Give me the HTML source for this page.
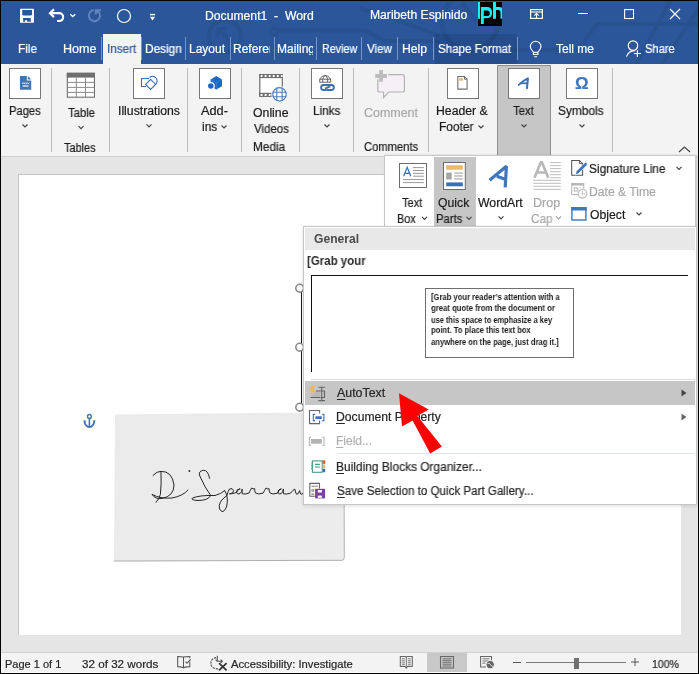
<!DOCTYPE html><html><head><meta charset="utf-8"><style>
html,body{margin:0;padding:0;width:699px;height:674px;overflow:hidden;background:#000}
.t{position:absolute;white-space:pre;will-change:transform;-webkit-text-stroke:0.2px currentColor;font-family:"Liberation Sans",sans-serif;transform-origin:0 0}
.r{position:absolute}
.s{position:absolute;overflow:visible}
</style></head><body>
<div class="r" style="left:0px;top:0px;width:699px;height:674px;background:#000;"></div>
<div class="r" style="left:1px;top:1px;width:697px;height:63px;background:#2b579a;"></div>
<svg class="s" style="left:1px;top:1px;overflow:hidden;" width="697" height="63" viewBox="1 1 697 63"><g fill="none" stroke="#28518f" stroke-width="4"><circle cx="225" cy="36" r="16"/><path d="M231 42L218 29M218 37V29H226" stroke-width="3.5"/><circle cx="273.6" cy="31.4" r="3.5" stroke-width="2.5"/><path d="M277 30.5H365L385 41H440"/><circle cx="470" cy="22" r="28" stroke-width="5"/><path d="M360 8L392 18L440 36"/><path d="M462 2L476 22"/><path d="M510 50H578L597 24H699"/><path d="M671 0L636 64M699 8L662 64"/></g></svg>
<svg class="s" style="left:20px;top:9px;" width="15" height="15" viewBox="0 0 15 15"><rect x="0" y="-0.2" width="14" height="14" rx="0.6" fill="#fff"/><path d="M2.2 1.1H12V5.5L11 6.4H3.2L2.2 5.5Z" fill="#2b579a"/><path d="M3.1 9H10.8V12.8H7.2V11.2H5V12.8H3.1Z" fill="#2b579a"/></svg>
<svg class="s" style="left:46px;top:6px;" width="20" height="18" viewBox="46 6 20 18"><path d="M50.5 13.2H59.2A3.9 3.9 0 0 1 59.2 21H57" fill="none" stroke="#fff" stroke-width="2.2"/><path d="M54 9.3L50 13.2L54 17.1" fill="none" stroke="#fff" stroke-width="2.2"/></svg>
<svg class="s" style="left:69px;top:12px;" width="8" height="6" viewBox="69 12 8 6"><path d="M70.3 14.2L72.8 16.5L75.3 14.2" fill="none" stroke="#fff" stroke-width="1.3"/></svg>
<svg class="s" style="left:85px;top:7px;" width="18" height="18" viewBox="85 7 18 18"><path d="M93.8 10A5.6 5.6 0 1 0 98.5 11.7" fill="none" stroke="#6184bd" stroke-width="1.9"/><path d="M101 10.1H95.8V14.8M95.8 10.1L98.6 12.8" fill="none" stroke="#6184bd" stroke-width="1.9"/></svg>
<svg class="s" style="left:115px;top:7px;" width="18" height="18" viewBox="115 7 18 18"><circle cx="124" cy="16" r="6.5" fill="none" stroke="#fff" stroke-width="1.2"/></svg>
<svg class="s" style="left:148px;top:12px;" width="9" height="10" viewBox="148 12 9 10"><path d="M149.9 14.6h5.2" stroke="#fff" stroke-width="1.4"/><path d="M149.9 16.8h5.2l-2.6 3.6z" fill="#fff"/></svg>
<div class="t" style="left:205.33px;top:10.00px;font-size:12px;line-height:12px;color:#fff;transform:scaleX(1.0150);">Document1  -  Word</div>
<div class="t" style="left:370.33px;top:9.00px;font-size:12px;line-height:12px;color:#fff;transform:scaleX(1.0114);">Maribeth Espinido</div>
<div class="r" style="left:478px;top:2px;width:24px;height:24px;background:#000;"></div>
<svg class="s" style="left:478px;top:2px;overflow:hidden;" width="24" height="24" viewBox="478 2 24 24"><g fill="#12f2f2"><rect x="478" y="2" width="2" height="16.8"/><path d="M480.9 6.9H487Q492.1 6.9 492.1 12.6Q492.1 18.3 487 18.3H483.8V24H480.9ZM483.8 10.5V16H487Q489.8 16 489.8 13.2Q489.8 10.5 487 10.5Z" fill-rule="evenodd"/><rect x="493" y="2" width="3" height="16.8"/><path d="M496 6.9H499Q503.5 6.9 503.5 11V18.8H500.5V12.5Q500.5 10 498.5 10H496Z"/></g></svg>
<svg class="s" style="left:528px;top:7px;" width="17" height="14" viewBox="528 7 17 14"><rect x="530.6" y="9.6" width="11.8" height="8.8" fill="none" stroke="#fff" stroke-width="1.2"/><path d="M531 12H542" stroke="#fff" stroke-width="1.1"/><path d="M536.5 18.4V13.6M534.3 15.6L536.5 13.4L538.7 15.6" fill="none" stroke="#fff" stroke-width="1.1"/></svg>
<div class="r" style="left:578px;top:13px;width:10px;height:1px;background:#fff;"></div>
<svg class="s" style="left:622px;top:7px;" width="14" height="14" viewBox="622 7 14 14"><rect x="624.6" y="9.6" width="8.9" height="8.9" fill="none" stroke="#fff" stroke-width="1.1"/></svg>
<svg class="s" style="left:669px;top:8px;" width="12" height="12" viewBox="0 0 12 12"><path d="M1 1L11 11M11 1L1 11" stroke="#fff" stroke-width="1.2"/></svg>
<div class="r" style="left:102.5px;top:34px;width:38.5px;height:30px;background:#f3f3f3;"></div>
<div class="r" style="left:435px;top:34px;width:82px;height:30px;background:rgba(10,20,50,0.14);"></div>
<div class="r" style="left:101px;top:37px;width:1px;height:23px;background:#7495c6;"></div>
<div class="r" style="left:141px;top:37px;width:1px;height:23px;background:#7495c6;"></div>
<div class="r" style="left:185px;top:37px;width:1px;height:23px;background:#7495c6;"></div>
<div class="r" style="left:230px;top:37px;width:1px;height:23px;background:#7495c6;"></div>
<div class="r" style="left:274px;top:37px;width:1px;height:23px;background:#7495c6;"></div>
<div class="r" style="left:316px;top:37px;width:1px;height:23px;background:#7495c6;"></div>
<div class="r" style="left:361px;top:37px;width:1px;height:23px;background:#7495c6;"></div>
<div class="r" style="left:397px;top:37px;width:1px;height:23px;background:#7495c6;"></div>
<div class="r" style="left:433px;top:37px;width:1px;height:23px;background:#7495c6;"></div>
<div class="r" style="left:517px;top:37px;width:1px;height:23px;background:#7495c6;"></div>
<div class="t" style="left:17.76px;top:43.00px;font-size:12px;line-height:12px;color:#fff;transform:scaleX(0.9820);">File</div>
<div class="t" style="left:62.70px;top:43.00px;font-size:12px;line-height:12px;color:#fff;transform:scaleX(1.0466);">Home</div>
<div class="t" style="left:145.46px;top:43.00px;font-size:12px;line-height:12px;color:#fff;transform:scaleX(0.9837);">Design</div>
<div class="t" style="left:189.04px;top:43.00px;font-size:12px;line-height:12px;color:#fff;">Layout</div>
<div class="t" style="left:321.54px;top:43.00px;font-size:12px;line-height:12px;color:#fff;transform:scaleX(0.8932);">Review</div>
<div class="t" style="left:367.14px;top:43.00px;font-size:12px;line-height:12px;color:#fff;transform:scaleX(0.9635);">View</div>
<div class="t" style="left:402.42px;top:43.00px;font-size:12px;line-height:12px;color:#fff;transform:scaleX(1.0164);">Help</div>
<div class="t" style="left:438.48px;top:43.00px;font-size:12px;line-height:12px;color:#fff;transform:scaleX(0.9626);">Shape Format</div>
<div class="t" style="left:555.66px;top:43.00px;font-size:12px;line-height:12px;color:#fff;">Tell me</div>
<div class="t" style="left:644.50px;top:43.00px;font-size:12px;line-height:12px;color:#fff;transform:scaleX(0.9288);">Share</div>
<div class="t" style="left:106.55px;top:43.00px;font-size:12px;line-height:12px;color:#2b579a;transform:scaleX(0.9737);">Insert</div>
<div class="t" style="left:233.04px;top:43.00px;font-size:12px;line-height:12px;color:#fff;width:36.5px;overflow:hidden;">References</div>
<div class="t" style="left:277.04px;top:43.00px;font-size:12px;line-height:12px;color:#fff;width:35.5px;overflow:hidden;">Mailings</div>
<svg class="s" style="left:527px;top:39px;" width="17" height="20" viewBox="527 39 17 20"><path d="M533.4 52.2Q530.3 49.2 530.3 46.6A5.35 5.35 0 0 1 541 46.6Q541 49.2 537.9 52.2V54.5H533.4Z" fill="none" stroke="#fff" stroke-width="1.15" stroke-linejoin="round"/><path d="M533.4 52.4H537.9M534.2 56.7H537.1" stroke="#fff" stroke-width="1.15"/></svg>
<svg class="s" style="left:623px;top:39px;" width="20" height="20" viewBox="623 39 20 20"><circle cx="633" cy="45.6" r="4.75" fill="none" stroke="#fff" stroke-width="1.2"/><path d="M626.5 56.6Q628.5 50.9 634.6 50.6" fill="none" stroke="#fff" stroke-width="1.2"/><path d="M637.4 50.2V57M634 53.5H641" stroke="#fff" stroke-width="1.2"/></svg>
<div class="r" style="left:1px;top:64px;width:697px;height:92px;background:#f3f3f3;"></div>
<div class="r" style="left:1px;top:156px;width:697px;height:1px;background:#d0d0d0;"></div>
<div class="r" style="left:1px;top:157px;width:697px;height:515px;background:#e5e5e5;"></div>
<div class="r" style="left:51px;top:68px;width:1px;height:84px;background:#bdbdbd;"></div>
<div class="r" style="left:109px;top:68px;width:1px;height:84px;background:#bdbdbd;"></div>
<div class="r" style="left:187px;top:68px;width:1px;height:84px;background:#bdbdbd;"></div>
<div class="r" style="left:241px;top:68px;width:1px;height:84px;background:#bdbdbd;"></div>
<div class="r" style="left:299px;top:68px;width:1px;height:84px;background:#bdbdbd;"></div>
<div class="r" style="left:353px;top:68px;width:1px;height:84px;background:#bdbdbd;"></div>
<div class="r" style="left:428px;top:68px;width:1px;height:84px;background:#bdbdbd;"></div>
<div class="r" style="left:612px;top:68px;width:1px;height:84px;background:#bdbdbd;"></div>
<div class="r" style="left:9px;top:68px;width:32px;height:31px;background:#fff;box-sizing:border-box;border:1px solid #777;"></div>
<svg class="s" style="left:19px;top:74px;" width="14" height="17" viewBox="19 74 14 17"><path d="M20 76H26.8V80.6H31.2V89.8H20Z" fill="#3f74b5"/><path d="M27.8 76L31.2 79.6H27.8Z" fill="#3f74b5"/><path d="M22.2 83.8l1-1.1 1 1.1 1-1.1 1 1.1 1-1.1 1 1.1 1-1.1" fill="none" stroke="#fff" stroke-width="0.9"/><path d="M22.6 86H28.6" stroke="#fff" stroke-width="1.2"/></svg>
<div class="t" style="left:8.51px;top:105.00px;font-size:12px;line-height:12px;color:#1a1a1a;transform:scaleX(0.9314);">Pages</div>
<svg class="s" style="left:21px;top:122px;" width="8" height="6" viewBox="21 122 8 6"><path d="M22.50 124.50L25.00 127.00L27.50 124.50" fill="none" stroke="#444" stroke-width="1.2"/></svg>
<svg class="s" style="left:66px;top:72px;" width="30" height="27" viewBox="66 72 30 27"><rect x="67.35" y="73.3" width="27.1" height="23.9" fill="#fff" stroke="#6e6e6e" stroke-width="1.1"/><rect x="66.8" y="72.8" width="28.2" height="4.8" fill="#6e6e6e"/><path d="M67.5 82.4H94.3M67.5 87.4H94.3M67.5 92.4H94.3M76.3 77.5V97M85.5 77.5V97" stroke="#8a8a8a" stroke-width="1"/></svg>
<div class="t" style="left:67.57px;top:107.00px;font-size:12px;line-height:12px;color:#1a1a1a;transform:scaleX(0.9391);">Table</div>
<svg class="s" style="left:77px;top:124px;" width="8" height="6" viewBox="77 124 8 6"><path d="M78.50 126.20L81.00 128.70L83.50 126.20" fill="none" stroke="#444" stroke-width="1.2"/></svg>
<div class="t" style="left:64.18px;top:141.60px;font-size:12px;line-height:12px;color:#1a1a1a;transform:scaleX(0.9083);">Tables</div>
<div class="r" style="left:133px;top:68px;width:32px;height:31px;background:#fff;box-sizing:border-box;border:1px solid #777;"></div>
<svg class="s" style="left:140px;top:73px;" width="20" height="20" viewBox="0 0 20 20"><path d="M6 13.5H1.5V5.5h7.5" fill="none" stroke="#3a6fb4" stroke-width="1.1"/><path d="M9.5 4.5A4.6 4.6 0 1 1 15.5 11.5" fill="none" stroke="#3a6fb4" stroke-width="1.1"/><path d="M10.6 6.4l5 5-5 5-5-5z" fill="#fff" stroke="#3a6fb4" stroke-width="1.1"/></svg>
<div class="t" style="left:117.50px;top:105.00px;font-size:12px;line-height:12px;color:#1a1a1a;transform:scaleX(1.0199);">Illustrations</div>
<svg class="s" style="left:145px;top:122px;" width="8" height="6" viewBox="145 122 8 6"><path d="M146.50 124.30L149.00 126.80L151.50 124.30" fill="none" stroke="#444" stroke-width="1.2"/></svg>
<div class="r" style="left:199px;top:68px;width:32px;height:31px;background:#fff;box-sizing:border-box;border:1px solid #777;"></div>
<svg class="s" style="left:207px;top:74px;" width="17" height="17" viewBox="0 0 17 17"><path d="M9.3 2L15 5.4V12.2L9.3 15.6L3.6 12.2V5.4Z" fill="#1e66c7"/><path d="M3.6 5.4L9.3 8.6L15 5.4M9.3 8.6V15.6" fill="none" stroke="#4d8ad8" stroke-width="0.6"/><circle cx="3.8" cy="12" r="3.4" fill="#1e66c7" stroke="#fff" stroke-width="1.2"/></svg>
<div class="t" style="left:201.00px;top:105.00px;font-size:12px;line-height:12px;color:#1a1a1a;transform:scaleX(1.0628);">Add-</div>
<div class="t" style="left:201.83px;top:121.00px;font-size:12px;line-height:12px;color:#1a1a1a;transform:scaleX(0.9887);">ins</div>
<svg class="s" style="left:220px;top:123px;" width="8" height="6" viewBox="220 123 8 6"><path d="M221.50 125.50L224.00 128.00L226.50 125.50" fill="none" stroke="#444" stroke-width="1.2"/></svg>
<svg class="s" style="left:257px;top:72px;" width="34" height="32" viewBox="257 72 34 32"><rect x="259.8" y="74.6" width="22.5" height="21.6" fill="#fff" stroke="#6e6e6e" stroke-width="1.2"/><rect x="259.2" y="74" width="23.6" height="4.1" fill="#6e6e6e"/><rect x="259.2" y="92.8" width="23.6" height="4" fill="#6e6e6e"/><rect x="260.60" y="75" width="1.9" height="2" fill="#fff"/><rect x="264.65" y="75" width="1.9" height="2" fill="#fff"/><rect x="268.70" y="75" width="1.9" height="2" fill="#fff"/><rect x="272.75" y="75" width="1.9" height="2" fill="#fff"/><rect x="276.80" y="75" width="1.9" height="2" fill="#fff"/><rect x="280.85" y="75" width="1.9" height="2" fill="#fff"/><rect x="260.60" y="94" width="1.9" height="2" fill="#fff"/><rect x="264.65" y="94" width="1.9" height="2" fill="#fff"/><rect x="268.70" y="94" width="1.9" height="2" fill="#fff"/><circle cx="279.5" cy="94.4" r="8.3" fill="#f3f3f3"/><circle cx="279.5" cy="94.4" r="6.7" fill="#fff" stroke="#4a7fc1" stroke-width="1.2"/><path d="M276.8 87.8V101M282.1 87.8V101M272.8 92.2H286.2M272.8 96.7H286.2" stroke="#4a7fc1" stroke-width="1.1"/></svg>
<div class="t" style="left:253.05px;top:106.60px;font-size:12px;line-height:12px;color:#1a1a1a;transform:scaleX(1.0238);">Online</div>
<div class="t" style="left:253.54px;top:122.60px;font-size:12px;line-height:12px;color:#1a1a1a;transform:scaleX(0.9556);">Videos</div>
<div class="t" style="left:253.46px;top:141.40px;font-size:12px;line-height:12px;color:#1a1a1a;transform:scaleX(0.9830);">Media</div>
<div class="r" style="left:311px;top:68px;width:32px;height:31px;background:#fff;box-sizing:border-box;border:1px solid #777;"></div>
<svg class="s" style="left:316px;top:73px;" width="22" height="20" viewBox="316 73 22 20"><clipPath id="gc"><rect x="316" y="73" width="22" height="9.4"/></clipPath><g clip-path="url(#gc)" fill="none" stroke="#666" stroke-width="1"><circle cx="325.2" cy="81.2" r="5.6"/><ellipse cx="325.2" cy="81.2" rx="2.5" ry="5.6"/><path d="M319.5 79.2h11.4"/></g><path d="M319.8 82.2h10.8" stroke="#666" stroke-width="1"/><path d="M328.6 85H323.6A2.5 2.5 0 0 0 323.6 90H326.4M326.6 90H331.4A2.5 2.5 0 0 0 331.4 85H328.6M325 88.6L330.2 86.4" fill="none" stroke="#3a6fb4" stroke-width="1.9"/></svg>
<div class="t" style="left:312.66px;top:105.00px;font-size:12px;line-height:12px;color:#1a1a1a;transform:scaleX(0.9760);">Links</div>
<svg class="s" style="left:323px;top:122px;" width="8" height="6" viewBox="323 122 8 6"><path d="M324.50 124.50L327.00 127.00L329.50 124.50" fill="none" stroke="#444" stroke-width="1.2"/></svg>
<svg class="s" style="left:373px;top:68px;" width="34" height="32" viewBox="373 68 34 32"><path d="M380 74.6H402.4A2 2 0 0 1 404.4 76.6V90A2 2 0 0 1 402.4 92H388.9L383.6 97.5V92H379.8A2 2 0 0 1 377.8 90V76.6Z" fill="#f5f0f5"/><path d="M388.3 74.6H402.4A2 2 0 0 1 404.4 76.6V90A2 2 0 0 1 402.4 92H388.9L383.6 97.5V92H379.8A2 2 0 0 1 377.8 90V79.3" fill="none" stroke="#b3b3b3" stroke-width="1.2"/><path d="M379.2 70H382.9V74H386.9V78H382.9V81.7H379.2V78H375.2V74H379.2Z" fill="#bcbcbc"/></svg>
<div class="t" style="left:363.78px;top:107.00px;font-size:12px;line-height:12px;color:#a8a8a8;transform:scaleX(1.0370);">Comment</div>
<div class="t" style="left:363.84px;top:141.40px;font-size:12px;line-height:12px;color:#1a1a1a;transform:scaleX(0.9333);">Comments</div>
<div class="r" style="left:447px;top:68px;width:32px;height:31px;background:#fff;box-sizing:border-box;border:1px solid #777;"></div>
<svg class="s" style="left:455px;top:74px;" width="15" height="18" viewBox="455 74 15 18"><path d="M457.8 76.5H464.5L467.1 79.2V89.1H457.8Z" fill="#fff" stroke="#707070" stroke-width="1.1"/><path d="M464.5 76.5V79.2H467.1" fill="none" stroke="#707070" stroke-width="1"/><rect x="459.2" y="78.2" width="3.8" height="2.5" fill="#eab86a"/></svg>
<div class="t" style="left:436.02px;top:105.00px;font-size:12px;line-height:12px;color:#1a1a1a;transform:scaleX(1.0210);">Header &</div>
<div class="t" style="left:439.45px;top:121.00px;font-size:12px;line-height:12px;color:#1a1a1a;transform:scaleX(0.9916);">Footer</div>
<svg class="s" style="left:477px;top:123px;" width="8" height="6" viewBox="477 123 8 6"><path d="M478.50 125.50L481.00 128.00L483.50 125.50" fill="none" stroke="#444" stroke-width="1.2"/></svg>
<div class="r" style="left:497px;top:65px;width:54px;height:91px;background:#c6c6c6;box-sizing:border-box;border:1px solid #8e8e8e;border-bottom:none;"></div>
<div class="r" style="left:508px;top:68px;width:32px;height:31px;background:#fff;box-sizing:border-box;border:1px solid #777;"></div>
<svg class="s" style="left:515px;top:74px;" width="16" height="17" viewBox="515 74 16 17"><path d="M518.8 84.9Q523 80.5 527.9 78.3L527 88.2" fill="none" stroke="#3a6fb4" stroke-width="2" stroke-linecap="round" stroke-linejoin="round"/><path d="M520.8 83.3H527" stroke="#3a6fb4" stroke-width="1.7"/></svg>
<div class="t" style="left:513.37px;top:105.00px;font-size:12px;line-height:12px;color:#1a1a1a;transform:scaleX(0.9418);">Text</div>
<svg class="s" style="left:520px;top:122px;" width="8" height="6" viewBox="520 122 8 6"><path d="M521.50 124.50L524.00 127.00L526.50 124.50" fill="none" stroke="#444" stroke-width="1.2"/></svg>
<div class="r" style="left:566px;top:68px;width:32px;height:31px;background:#fff;box-sizing:border-box;border:1px solid #777;"></div>
<div class="t" style="left:575.14px;top:75.00px;font-size:17px;line-height:17px;color:#3f77bd;font-weight:bold;font-family:"Liberation Serif",serif;transform:scaleX(1.1185);">Ω</div>
<div class="t" style="left:558.47px;top:105.00px;font-size:12px;line-height:12px;color:#1a1a1a;transform:scaleX(0.9898);">Symbols</div>
<svg class="s" style="left:578px;top:122px;" width="8" height="6" viewBox="578 122 8 6"><path d="M579.50 124.50L582.00 127.00L584.50 124.50" fill="none" stroke="#444" stroke-width="1.2"/></svg>
<svg class="s" style="left:678px;top:146px;" width="13" height="7" viewBox="0 0 13 7"><path d="M1 6L6.5 1L12 6" fill="none" stroke="#444" stroke-width="1.1"/></svg>
<div class="r" style="left:18px;top:174px;width:663px;height:1px;background:#c4c4c4;"></div>
<div class="r" style="left:18px;top:174px;width:1px;height:461px;background:#c4c4c4;"></div>
<div class="r" style="left:19px;top:175px;width:662px;height:460px;background:#fff;"></div>
<svg class="s" style="left:81px;top:412px;" width="17" height="18" viewBox="81 412 17 18"><circle cx="89.4" cy="416.4" r="1.9" fill="none" stroke="#3f74b5" stroke-width="1.4"/><path d="M89.4 418.2V427" stroke="#3f74b5" stroke-width="1.6"/><path d="M84.3 421.5Q85.5 426.8 89.4 427.2Q93.3 426.8 94.5 421.5" fill="none" stroke="#3f74b5" stroke-width="1.7"/><path d="M83 420.6H86.2L84.8 423ZM92.6 420.6H95.8L94 423Z" fill="#3f74b5"/></svg>
<svg class="s" style="left:110px;top:408px;" width="240" height="160" viewBox="110 408 240 160"><defs><linearGradient id="pg" x1="0" y1="0" x2="1" y2="1"><stop offset="0" stop-color="#eaeaea"/><stop offset="1" stop-color="#ececec"/></linearGradient></defs><path d="M115 414.5 Q230 413 343.5 412.5 L344 558 Q344.5 560.5 342 560.8 L114 561.5 Z" fill="url(#pg)"/><path d="M114 561 L342 560.3 Q344.3 560 344.3 557.5 L343.9 413" fill="none" stroke="#a8a8a8" stroke-width="0.9"/><g fill="none" stroke="#262626" stroke-width="1" stroke-linecap="round" stroke-linejoin="round"><path d="M153 475.4 Q157 471 161 471.4 Q172 471 174 485 Q174 496 162 498.5 Q155 499.5 152 494.3 Q160 499 172 498 Q183 496 188 490"/><path d="M161 471.4 Q161.5 485 160.4 494.3 Q159.5 499 156 502.3"/><path d="M209.6 478.3 Q208 470 203.4 470.3 Q198 471 199.8 476 Q205 488 210.8 495.5 Q208 500.5 198 500.5 Q190 500 192.5 498 Q200 495 215 495.5 Q221 494 224.7 490.6"/><path d="M224.7 490.6 Q229 497 226.5 507 Q223 515 219.5 509 Q217.5 502 227 495.5 Q228 491 229.5 489 Q232.5 487.5 233.6 490.5 Q233.5 493.8 229.5 493.8 Q233 494 236.2 492.5 Q236.5 489 240.2 488.8 Q236.8 489.6 236.6 492.8 Q237.5 494.6 240 493.6 Q241.8 492 242.2 489 Q241.8 492.5 242.4 493.8 Q245 494.6 249 493 Q250.5 490 251.6 488 Q253 489.6 254.6 488.6 Q254.6 491.5 255.5 493 Q258 494.8 263 493.2 Q264.8 490 266 488 Q267.5 489.6 269 488.6 Q269 491.5 270 493 Q272.5 494.8 277.5 493.2 Q278.2 489 281.4 488.8 Q278.2 489.6 278 492.8 Q279 494.6 281.2 493.6 Q283 492 283.4 489 Q283 492.5 283.6 493.8 Q286 494.6 290.5 493.2 Q293 490 294.8 489 Q295.5 492.5 296.5 494.2 Q298.5 495 299.6 490.6 Q300 493.5 301.2 494.4 Q303.5 494.8 304.5 489.6"/></g><circle cx="189.4" cy="471" r="0.9" fill="#262626"/></svg>
<div class="r" style="left:301px;top:288px;width:1.4px;height:119px;background:#1a1a1a;"></div>
<svg class="s" style="left:294px;top:283px;" width="11" height="11" viewBox="0 0 11 11"><circle cx="5.7" cy="5.2" r="3.9" fill="#fff" stroke="#888" stroke-width="1.6"/></svg>
<svg class="s" style="left:294px;top:342px;" width="11" height="11" viewBox="0 0 11 11"><circle cx="5.7" cy="5.2" r="3.9" fill="#fff" stroke="#888" stroke-width="1.6"/></svg>
<svg class="s" style="left:294px;top:402px;" width="11" height="11" viewBox="0 0 11 11"><circle cx="5.7" cy="5.2" r="3.9" fill="#fff" stroke="#888" stroke-width="1.6"/></svg>
<div class="r" style="left:384px;top:155px;width:312px;height:72px;background:#c8c8c8;box-shadow:1px 0 2px rgba(0,0,0,0.15);"></div>
<div class="r" style="left:385px;top:156px;width:310px;height:70px;background:#fff;"></div>
<div class="r" style="left:434px;top:157px;width:42px;height:69px;background:#c6c6c6;"></div>
<svg class="s" style="left:398px;top:162px;" width="30" height="27" viewBox="398 162 30 27"><rect x="399.5" y="163.5" width="27" height="24" fill="#fff" stroke="#6b6b6b"/><path d="M403.6 176.2L407.2 167.3L410.8 176.2M404.8 173.3H409.7" fill="none" stroke="#3a6fb4" stroke-width="1.25"/><path d="M413 167.6H423.8M413 170.5H423.8M413 173.4H423.8M413 176.2H423.8M403 179.6H423.8M403 182.6H423.8" stroke="#8c8c8c" stroke-width="0.9"/></svg>
<div class="t" style="left:402.18px;top:196.70px;font-size:12px;line-height:12px;color:#1a1a1a;transform:scaleX(0.9187);">Text</div>
<div class="t" style="left:396.93px;top:212.80px;font-size:12px;line-height:12px;color:#1a1a1a;transform:scaleX(0.9021);">Box</div>
<svg class="s" style="left:420px;top:215px;" width="8" height="6" viewBox="420 215 8 6"><path d="M422.00 216.80L424.50 219.30L427.00 216.80" fill="none" stroke="#444" stroke-width="1.2"/></svg>
<svg class="s" style="left:442px;top:161px;" width="25" height="30" viewBox="442 161 25 30"><rect x="443.5" y="162.5" width="21.8" height="27" fill="#fff" stroke="#6b6b6b"/><rect x="446.2" y="165.2" width="16.6" height="4.5" fill="#eaba6b"/><rect x="446.2" y="172.6" width="5.5" height="6.9" fill="#a5a5a5"/><path d="M454.2 173.1h8.6M454.2 176h8.6M454.2 178.9h8.6" stroke="#8c8c8c" stroke-width="0.9"/><rect x="446.2" y="182.4" width="16.6" height="3.9" fill="#3a6fb4"/></svg>
<div class="t" style="left:438.45px;top:196.70px;font-size:12px;line-height:12px;color:#1a1a1a;transform:scaleX(1.0193);">Quick</div>
<div class="t" style="left:435.80px;top:212.80px;font-size:12px;line-height:12px;color:#1a1a1a;transform:scaleX(0.9384);">Parts</div>
<svg class="s" style="left:465px;top:215px;" width="8" height="6" viewBox="465 215 8 6"><path d="M466.50 216.80L469.00 219.30L471.50 216.80" fill="none" stroke="#444" stroke-width="1.2"/></svg>
<svg class="s" style="left:486px;top:162px;" width="25" height="28" viewBox="486 162 25 28"><path d="M489.6 180.2L506.4 166.2L505.2 187.3M497 176.3L505 179.3" fill="none" stroke="#3f77bd" stroke-width="3.2" stroke-linejoin="bevel"/></svg>
<div class="t" style="left:478.34px;top:196.70px;font-size:12px;line-height:12px;color:#1a1a1a;transform:scaleX(1.0225);">WordArt</div>
<svg class="s" style="left:497px;top:214px;" width="8" height="6" viewBox="497 214 8 6"><path d="M498.50 216.30L501.00 218.80L503.50 216.30" fill="none" stroke="#444" stroke-width="1.2"/></svg>
<svg class="s" style="left:530px;top:160px;" width="33" height="32" viewBox="530 160 33 32"><path d="M534.5 177.7L540.9 162.2H541.9L548.3 177.7M537 172.5H545.8" fill="none" stroke="#b8b8b8" stroke-width="2.6"/><path d="M550.2 162.6H560.8M550.2 165.6H560.8M550.2 168.6H560.8M550.2 171.7H560.8M550.2 174.7H560.8M550.2 177.7H560.8M533.2 180.3H560.8M533.2 183.3H560.8M533.2 186.3H560.8M533.2 189.3H560.8" stroke="#bdbdbd" stroke-width="1"/></svg>
<div class="t" style="left:532.99px;top:196.90px;font-size:12px;line-height:12px;color:#a8a8a8;transform:scaleX(1.0473);">Drop</div>
<div class="t" style="left:530.91px;top:212.50px;font-size:12px;line-height:12px;color:#a8a8a8;transform:scaleX(0.9790);">Cap</div>
<svg class="s" style="left:554px;top:214px;" width="8" height="6" viewBox="554 214 8 6"><path d="M556.00 216.50L558.50 219.00L561.00 216.50" fill="none" stroke="#aaa" stroke-width="1.2"/></svg>
<svg class="s" style="left:569px;top:158px;" width="20" height="20" viewBox="569 158 20 20"><path d="M571.7 160.5H579.5L582.6 163.6V175.3H571.7Z" fill="#fff" stroke="#555" stroke-width="1.05"/><path d="M579.5 160.5V163.6H582.6" fill="none" stroke="#555" stroke-width="0.9"/><path d="M575.3 175L576.3 171.2L584.6 162.9A1.4 1.4 0 0 1 586.9 165.2L578.6 173.5Z" fill="#3f77bd" stroke="#fff" stroke-width="0.6"/></svg>
<div class="t" style="left:589.47px;top:163.00px;font-size:12px;line-height:12px;color:#1a1a1a;transform:scaleX(0.9893);">Signature Line</div>
<svg class="s" style="left:675px;top:165px;" width="8" height="6" viewBox="675 165 8 6"><path d="M676.50 166.80L679.00 169.30L681.50 166.80" fill="none" stroke="#444" stroke-width="1.2"/></svg>
<svg class="s" style="left:569px;top:181px;" width="20" height="20" viewBox="569 181 20 20"><rect x="571.7" y="183.5" width="12" height="11" fill="none" stroke="#b8b8b8" stroke-width="1"/><rect x="571.2" y="183" width="13" height="2.6" fill="#b8b8b8"/><path d="M573.5 188h1.5M576.5 188h1.5M579.5 188h1.5M573.5 191h1.5" stroke="#c4c4c4" stroke-width="1"/><rect x="574.3" y="187.8" width="3.5" height="3.2" fill="none" stroke="#b8b8b8" stroke-width="0.9"/><circle cx="582.5" cy="193.8" r="4.3" fill="#fff" stroke="#b8b8b8" stroke-width="1.1"/><path d="M582.3 191V194H585" fill="none" stroke="#b8b8b8" stroke-width="0.9"/></svg>
<div class="t" style="left:589.43px;top:186.00px;font-size:12px;line-height:12px;color:#a8a8a8;transform:scaleX(1.0124);">Date &amp; Time</div>
<svg class="s" style="left:569px;top:205px;" width="20" height="18" viewBox="569 205 20 18"><rect x="571.9" y="207.7" width="14" height="12.3" fill="#fff" stroke="#3f77bd" stroke-width="1.4"/><rect x="571.2" y="207" width="15.4" height="3.5" fill="#3f77bd"/></svg>
<div class="t" style="left:589.85px;top:208.70px;font-size:12px;line-height:12px;color:#1a1a1a;transform:scaleX(1.0170);">Object</div>
<svg class="s" style="left:635px;top:210px;" width="8" height="6" viewBox="635 210 8 6"><path d="M636.50 212.50L639.00 215.00L641.50 212.50" fill="none" stroke="#444" stroke-width="1.2"/></svg>
<div class="r" style="left:303px;top:226px;width:394px;height:279px;background:#c6c6c6;box-shadow:0 1px 4px rgba(0,0,0,0.13);"></div>
<div class="r" style="left:304px;top:227px;width:392px;height:277px;background:#fff;"></div>
<div class="r" style="left:305px;top:228px;width:390px;height:22px;background:#e8e8e8;"></div>
<div class="t" style="left:313.82px;top:232.60px;font-size:12px;line-height:12px;color:#4a4a4a;font-weight:bold;transform:scaleX(1.0074);-webkit-text-stroke:0;">General</div>
<div class="t" style="left:307.27px;top:255.00px;font-size:12px;line-height:12px;color:#2a2a2a;font-weight:bold;transform:scaleX(0.9564);-webkit-text-stroke:0;">[Grab your</div>
<div class="r" style="left:311px;top:275px;width:377px;height:1px;background:#111;"></div>
<div class="r" style="left:311px;top:275px;width:1px;height:97px;background:#111;"></div>
<div class="r" style="left:425px;top:288px;width:149px;height:70px;background:#6e6e6e;"></div>
<div class="r" style="left:426px;top:289px;width:147px;height:68px;background:#fff;"></div>
<div class="t" style="left:430.98px;top:292.60px;font-size:8.5px;line-height:8.5px;color:#1a1a1a;font-weight:bold;transform:scaleX(0.8968);-webkit-text-stroke:0;">[Grab your reader’s attention with a</div>
<div class="t" style="left:431.09px;top:304.20px;font-size:8.5px;line-height:8.5px;color:#1a1a1a;font-weight:bold;transform:scaleX(0.9074);-webkit-text-stroke:0;">great quote from the document or</div>
<div class="t" style="left:430.95px;top:315.60px;font-size:8.5px;line-height:8.5px;color:#1a1a1a;font-weight:bold;transform:scaleX(0.8747);-webkit-text-stroke:0;">use this space to emphasize a key</div>
<div class="t" style="left:430.91px;top:326.30px;font-size:8.5px;line-height:8.5px;color:#1a1a1a;font-weight:bold;transform:scaleX(0.8922);-webkit-text-stroke:0;">point. To place this text box</div>
<div class="t" style="left:431.17px;top:337.70px;font-size:8.5px;line-height:8.5px;color:#1a1a1a;font-weight:bold;transform:scaleX(0.8957);-webkit-text-stroke:0;">anywhere on the page, just drag it.]</div>
<div class="r" style="left:311px;top:379px;width:384px;height:1px;background:#dcdcdc;"></div>
<div class="r" style="left:305px;top:381px;width:390px;height:24px;background:#c6c6c6;"></div>
<div class="t" style="left:337.20px;top:386.70px;font-size:12px;line-height:12px;color:#262626;transform:scaleX(1.0317);"><u style="text-decoration-thickness:1px;text-underline-offset:2px">A</u>utoText</div>
<div class="t" style="left:336.23px;top:411.00px;font-size:12px;line-height:12px;color:#262626;transform:scaleX(1.0135);"><u style="text-decoration-thickness:1px;text-underline-offset:2px">D</u>ocument Property</div>
<div class="t" style="left:336.24px;top:435.00px;font-size:12px;line-height:12px;color:#b0b0b0;"><u style="text-decoration-thickness:1px;text-underline-offset:2px">F</u>ield...</div>
<div class="r" style="left:337px;top:453px;width:358px;height:1px;background:#dde3ea;"></div>
<div class="t" style="left:336.25px;top:460.70px;font-size:12px;line-height:12px;color:#262626;transform:scaleX(0.9941);"><u style="text-decoration-thickness:1px;text-underline-offset:2px">B</u>uilding Blocks Organizer...</div>
<div class="t" style="left:336.68px;top:484.80px;font-size:12px;line-height:12px;color:#262626;transform:scaleX(0.9666);"><u style="text-decoration-thickness:1px;text-underline-offset:2px">S</u>ave Selection to Quick Part Gallery...</div>
<svg class="s" style="left:681px;top:389px;" width="6" height="8" viewBox="0 0 6 8"><path d="M0.5 0.5L5.5 4L0.5 7.5z" fill="#444"/></svg>
<svg class="s" style="left:681px;top:413px;" width="6" height="8" viewBox="0 0 6 8"><path d="M0.5 0.5L5.5 4L0.5 7.5z" fill="#666"/></svg>
<svg class="s" style="left:305px;top:382px;" width="22" height="22" viewBox="305 382 22 22"><path d="M315.8 385.3H311.8L308.9 391.2H312.6L309.3 395.8L316.5 389.6H313.4Z" fill="#eab86a"/><path d="M316 391H320.3V397.5H310.5Z" fill="#b8b8b8"/><path d="M316 391H320.3M310.5 397.5H320.3" stroke="#666" stroke-width="1.1"/><path d="M318.3 387.3H325M318.3 400.6H325M321.7 387.3V400.6M320.5 391H324.5V397.5H320.5" fill="none" stroke="#666" stroke-width="1.1"/></svg>
<svg class="s" style="left:305px;top:406px;" width="22" height="20" viewBox="305 406 22 20"><path d="M319.6 413.6V410.5H309.5V423.6H319.6V420.6" fill="none" stroke="#666" stroke-width="1.1"/><path d="M315 414.4H313.3V420.6H315M322.2 414.4H323.9V420.6H322.2" fill="none" stroke="#3a6fb4" stroke-width="1.1"/><rect x="315.4" y="416.3" width="6.4" height="2.7" fill="#3a6fb4"/></svg>
<svg class="s" style="left:305px;top:434px;" width="22" height="14" viewBox="305 434 22 14"><path d="M311 437.4H309.4V445.4H311M322.4 437.4H324V445.4H322.4" fill="none" stroke="#b5b5b5" stroke-width="1.1"/><rect x="311" y="439" width="10.9" height="4.7" fill="#b3b3b3"/></svg>
<svg class="s" style="left:305px;top:457px;" width="24" height="19" viewBox="305 457 24 19"><rect x="312.4" y="460.9" width="9.8" height="11.4" fill="#fff" stroke="#4a9a8a" stroke-width="1.1"/><path d="M311 462.5l2 1.5-2 1.5 2 1.5-2 1.5 2 1.5" fill="none" stroke="#4a9a8a" stroke-width="0.8"/><path d="M315 464.4h5M315 467h5" stroke="#4a9a8a" stroke-width="1.1"/><rect x="322.6" y="460.4" width="2.6" height="3.4" fill="#e0552b"/><rect x="322.6" y="464.5" width="2.6" height="3.4" fill="#eab86a"/><rect x="322.6" y="468.7" width="2.6" height="3.5" fill="#3a6fb4"/></svg>
<svg class="s" style="left:305px;top:480px;" width="24" height="22" viewBox="305 480 24 22"><path d="M315 496.3H309.8V483.4H319.5V488.5" fill="none" stroke="#666" stroke-width="1.1"/><path d="M311.5 486.3h6.5" stroke="#aaa" stroke-width="1.5"/><rect x="311.3" y="489" width="3" height="3" fill="#aaa"/><rect x="311.3" y="493.2" width="3" height="2" fill="#aaa"/><path d="M315.1 488.8H325.1V498.4H315.1Z" fill="#7b3fa0"/><rect x="317.8" y="490" width="4.1" height="2.5" fill="#fff"/><rect x="317.8" y="495.6" width="4.1" height="2.2" fill="#fff"/></svg>
<svg class="s" style="left:395px;top:390px;" width="50" height="66" viewBox="395 390 50 66"><path d="M399 393.3L428.7 409.4L417.4 416.1L441.9 446.6L430.2 453.5L412.6 420.6L402 426.5Z" fill="#ff0000"/></svg>
<div class="r" style="left:1px;top:652px;width:697px;height:1px;background:#d0d0d0;"></div>
<div class="r" style="left:1px;top:653px;width:697px;height:20px;background:#f3f3f3;"></div>
<div class="r" style="left:1px;top:653px;width:1px;height:20px;background:#fafafa;"></div>
<div class="r" style="left:1px;top:672px;width:697px;height:1px;background:#fafafa;"></div>
<div class="t" style="left:5.02px;top:659.00px;font-size:11px;line-height:11px;color:#262626;">Page 1 of 1</div>
<div class="t" style="left:81.73px;top:659.00px;font-size:11px;line-height:11px;color:#262626;transform:scaleX(1.0584);">32 of 32 words</div>
<svg class="s" style="left:175px;top:654px;" width="18" height="16" viewBox="175 654 18 16"><path d="M183.5 667.8V657Q181 656.4 177.7 656.4V666.6Q181 666.6 183.5 667.8ZM183.5 657Q186 656.4 189.8 656.4V658.3M189.8 661.8V666.6Q186 666.6 183.5 667.8" fill="none" stroke="#555" stroke-width="1.05"/><path d="M185.5 661.7L187 663.3L190.6 659.5" fill="none" stroke="#555" stroke-width="1.1"/></svg>
<svg class="s" style="left:209px;top:654px;" width="20" height="18" viewBox="209 654 20 18"><path d="M216 657.6A5.6 5.6 0 1 0 218.5 668.4" fill="none" stroke="#555" stroke-width="1.2" stroke-dasharray="2.2 1"/><path d="M217.3 655.8V661.3H222.3M215.6 659.6L217.3 661.3M220.6 659.6L222.3 661.3L220.6 663" fill="none" stroke="#555" stroke-width="1.1"/><path d="M219 663.2L226.6 670.3M226.6 663.2L219 670.3" stroke="#333" stroke-width="1.7"/></svg>
<div class="t" style="left:230.70px;top:659.00px;font-size:11px;line-height:11px;color:#262626;transform:scaleX(1.0220);">Accessibility: Investigate</div>
<svg class="s" style="left:398px;top:654px;" width="17" height="17" viewBox="398 654 17 17"><path d="M400.3 656.5H405.5L406.3 657.3L407.1 656.5H412.3V666.5H407.5L406.3 668.2L405.1 666.5H400.3Z" fill="none" stroke="#666" stroke-width="1.05"/><path d="M406.3 657.3V667M401.8 658.8h3M401.8 660.8h3M401.8 662.8h3M401.8 664.8h3M407.8 658.8h3M407.8 660.8h3M407.8 662.8h3M407.8 664.8h3" stroke="#666" stroke-width="0.9"/></svg>
<div class="r" style="left:427px;top:653px;width:40px;height:19px;background:#c8c8c8;"></div>
<svg class="s" style="left:438px;top:654px;" width="18" height="17" viewBox="438 654 18 17"><rect x="440.5" y="656.5" width="13" height="11.5" fill="none" stroke="#666" stroke-width="1.05"/><path d="M442.5 658.8h9M442.5 660.6h9M442.5 662.4h9M442.5 664.2h9M442.5 666h9" stroke="#666" stroke-width="0.9"/></svg>
<svg class="s" style="left:478px;top:654px;" width="18" height="17" viewBox="478 654 18 17"><path d="M486 667H480.6V656.4H491.5V661" fill="none" stroke="#666" stroke-width="1.05"/><path d="M482.5 658.8h7M482.5 661h7M482.5 663.2h3" stroke="#666" stroke-width="0.9"/><circle cx="490.2" cy="664.6" r="4.2" fill="#666" stroke="#f3f3f3" stroke-width="1"/><path d="M487.5 663.5Q489.5 662.5 490.5 664.5T493 666.5" fill="none" stroke="#f3f3f3" stroke-width="0.8"/></svg>
<div class="r" style="left:513px;top:662px;width:8px;height:1px;background:#555;"></div>
<div class="r" style="left:526px;top:662px;width:100px;height:1px;background:#777;"></div>
<div class="r" style="left:574px;top:658px;width:5px;height:11px;background:#707070;"></div>
<svg class="s" style="left:630px;top:657px;" width="10" height="10" viewBox="0 0 10 10"><path d="M1 5h8M5 1v8" stroke="#555" stroke-width="1"/></svg>
<div class="t" style="left:652.21px;top:659.00px;font-size:11px;line-height:11px;color:#262626;transform:scaleX(0.9610);">100%</div>
</body></html>
